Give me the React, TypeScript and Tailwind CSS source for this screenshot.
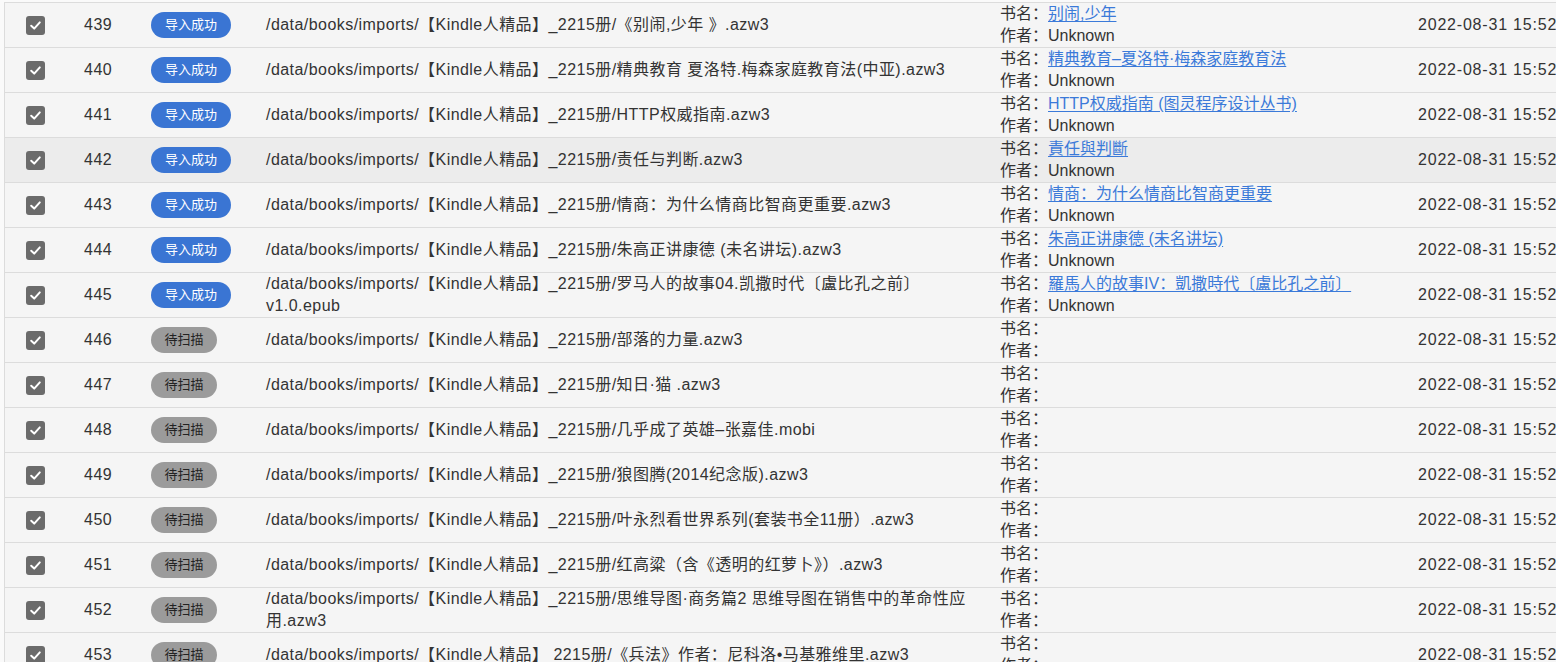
import React from "react";

type Row = {
  id: number;
  ok: boolean;
  path: string;
  title?: string;
  author?: string;
  hover?: boolean;
};

const P = "/data/books/imports/【Kindle人精品】_2215册/";

const rows: Row[] = [
  { id: 439, ok: true, path: P + "《别闹,少年 》.azw3", title: "别闹,少年", author: "Unknown" },
  { id: 440, ok: true, path: P + "精典教育 夏洛特.梅森家庭教育法(中亚).azw3", title: "精典教育–夏洛特·梅森家庭教育法", author: "Unknown" },
  { id: 441, ok: true, path: P + "HTTP权威指南.azw3", title: "HTTP权威指南 (图灵程序设计丛书)", author: "Unknown" },
  { id: 442, ok: true, path: P + "责任与判断.azw3", title: "責任與判斷", author: "Unknown", hover: true },
  { id: 443, ok: true, path: P + "情商：为什么情商比智商更重要.azw3", title: "情商：为什么情商比智商更重要", author: "Unknown" },
  { id: 444, ok: true, path: P + "朱高正讲康德 (未名讲坛).azw3", title: "朱高正讲康德 (未名讲坛)", author: "Unknown" },
  { id: 445, ok: true, path: P + "罗马人的故事04.凯撒时代〔盧比孔之前〕 v1.0.epub", title: "羅馬人的故事IV：凱撒時代〔盧比孔之前〕", author: "Unknown" },
  { id: 446, ok: false, path: P + "部落的力量.azw3" },
  { id: 447, ok: false, path: P + "知日·猫 .azw3" },
  { id: 448, ok: false, path: P + "几乎成了英雄–张嘉佳.mobi" },
  { id: 449, ok: false, path: P + "狼图腾(2014纪念版).azw3" },
  { id: 450, ok: false, path: P + "叶永烈看世界系列(套装书全11册）.azw3" },
  { id: 451, ok: false, path: P + "红高粱（含《透明的红萝卜》）.azw3" },
  { id: 452, ok: false, path: P + "思维导图·商务篇2 思维导图在销售中的革命性应用.azw3" },
  { id: 453, ok: false, path: "/data/books/imports/【Kindle人精品】 2215册/《兵法》作者：尼科洛•马基雅维里.azw3" },
];

function Check() {
  return (
    <div className="w-[19px] h-[19px] rounded-[3px] bg-[#6b6b6b] flex items-center justify-center">
      <svg width="13" height="13" viewBox="0 0 13 13" fill="none">
        <path d="M2.2 6.8 L5.2 9.6 L10.8 3.4" stroke="white" strokeWidth="2" strokeLinecap="round" strokeLinejoin="round" />
      </svg>
    </div>
  );
}

export default function App() {
  return (
    <div
      className="w-[1556px] h-[662px] overflow-hidden bg-[#fafafa] text-[#222] pl-[4px] pt-[2px]"
      style={{ fontFamily: '"Liberation Sans", "Noto Sans CJK SC", sans-serif' }}
    >
      <div className="w-[1700px] border-l border-t border-[#dcdcdc] bg-[#f5f5f5]">
        {rows.map((r) => (
          <div
            key={r.id}
            className={`flex items-center h-[45px] border-b border-[#dcdcdc] text-[16px] leading-[22px] ${r.hover ? "bg-[#ececec]" : "bg-[#f5f5f5]"}`}
          >
            <div className="w-[79px] pl-[21px] shrink-0">
              <Check />
            </div>
            <div className="w-[67px] shrink-0 text-[#333] tracking-[0.5px]">{r.id}</div>
            <div className="w-[115px] shrink-0">
              {r.ok ? (
                <span className="inline-flex items-center justify-center w-[80px] h-[26px] rounded-full bg-[#3a75d3] text-white text-[13px]">
                  导入成功
                </span>
              ) : (
                <span className="inline-flex items-center justify-center w-[66px] h-[26px] rounded-full bg-[#9b9b9b] text-[#222] text-[13px]">
                  待扫描
                </span>
              )}
            </div>
            <div className="w-[734px] shrink-0 pr-[22px] text-[#333] tracking-[0.45px]">{r.path}</div>
            <div className="w-[418px] shrink-0 text-[#333]">
              <div className="flex">
                <span>书名：</span>
                {r.title && <span className="text-[#3b7ad9] underline underline-offset-2">{r.title}</span>}
              </div>
              <div className="flex">
                <span>作者：</span>
                {r.author && <span>{r.author}</span>}
              </div>
            </div>
            <div className="shrink-0 whitespace-nowrap text-[#333] tracking-[0.8px]">2022-08-31 15:52:33</div>
          </div>
        ))}
      </div>
    </div>
  );
}
